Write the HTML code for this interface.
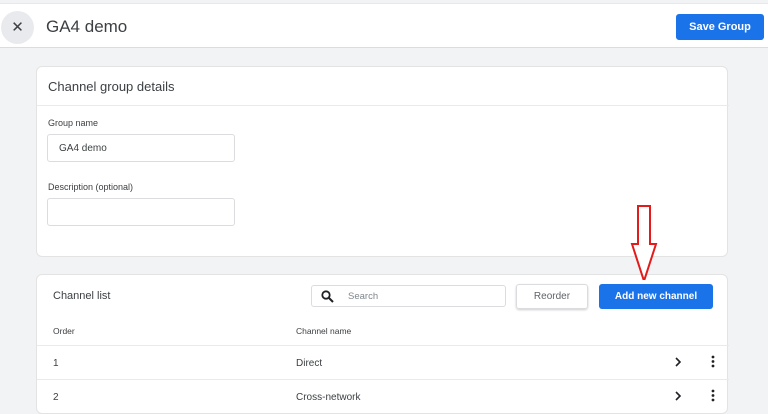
<!DOCTYPE html>
<html><head><style>
*{box-sizing:border-box;margin:0;padding:0}
body{width:768px;height:403px;overflow:hidden;background:#f1f3f4;font-family:"Liberation Sans",sans-serif;color:#202124;position:relative}
.top{position:absolute;left:0;top:3px;width:768px;height:45px;background:#fff;border-top:1px solid #e8e8e8;border-bottom:1px solid #dadce0}
.close{position:absolute;left:1px;top:7px;width:33px;height:33px;border-radius:50%;background:#e8eaed;text-align:center;line-height:33px;font-size:15px;color:#3c4043}
.title{position:absolute;left:46px;top:13px;font-size:17px;color:#3c4043}
.save{position:absolute;left:676px;top:10px;width:88px;height:26px;background:#1a73e8;color:#fff;border-radius:3px;font-size:11px;font-weight:bold;text-align:center;line-height:26px}
.card{position:absolute;left:36px;width:692px;background:#fff;border-radius:6px;border:1px solid #e3e3e3}
.lbl{position:absolute;font-size:9px;color:#3c4043}
.inp{position:absolute;width:188px;height:28px;border:1px solid #dadce0;border-radius:3px;font-size:10px;line-height:26px;padding-left:11px;color:#3c4043}
.t{position:absolute;font-size:10px;color:#3c4043}
.hr{position:absolute;left:0;width:692px;height:1px;background:#e8eaed}
</style></head><body>
<div class="top"><div class="close">✕</div><div class="title">GA4 demo</div><div class="save">Save Group</div></div>
<div class="card" style="top:66px;height:191px">
 <div style="position:absolute;left:11px;top:12px;font-size:13px;color:#3c4043">Channel group details</div>
 <div class="hr" style="top:38px"></div>
 <div class="lbl" style="left:11px;top:51px">Group name</div>
 <div class="inp" style="left:10px;top:67px;line-height:27px">GA4 demo</div>
 <div class="lbl" style="left:11px;top:115px">Description (optional)</div>
 <div class="inp" style="left:10px;top:131px"></div>
</div>
<div class="card" style="top:274px;height:140px">
 <div style="position:absolute;left:16px;top:15px;font-size:11px;color:#3c4043">Channel list</div>
 <div style="position:absolute;left:274px;top:10px;width:195px;height:22px;border:1px solid #dadce0;border-radius:3px">
  <svg style="position:absolute;left:9px;top:4px" width="13" height="13" viewBox="0 0 13 13"><circle cx="5" cy="5" r="3.7" fill="none" stroke="#202124" stroke-width="1.8"/><path d="M8 8l4 4" stroke="#202124" stroke-width="2"/></svg>
  <span style="position:absolute;left:36px;top:5px;font-size:9.5px;color:#80868b">Search</span></div>
 <div style="position:absolute;left:479px;top:9px;width:72px;height:25px;border:1px solid #dadce0;border-radius:3px;box-shadow:0 1px 2px rgba(0,0,0,.2);text-align:center;line-height:24px;font-size:10px;color:#5f6368">Reorder</div>
 <div style="position:absolute;left:562px;top:9px;width:114px;height:25px;background:#1a73e8;border-radius:3px;text-align:center;line-height:25px;font-size:10px;font-weight:bold;color:#fff">Add new channel</div>
 <div class="t" style="left:16px;top:51px;font-size:8.5px">Order</div>
 <div class="t" style="left:259px;top:51px;font-size:8.5px">Channel name</div>
 <div class="hr" style="top:70px"></div>
 <div class="t" style="left:16px;top:83px">1</div><div class="t" style="left:259px;top:83px">Direct</div>
 <div class="hr" style="top:104px"></div>
 <div class="t" style="left:16px;top:117px">2</div><div class="t" style="left:259px;top:117px">Cross-network</div>
 <svg style="position:absolute;left:636px;top:81px" width="10" height="50"><path d="M3 2l4 4-4 4M3 36l4 4-4 4" fill="none" stroke="#202124" stroke-width="1.6"/></svg>
 <svg style="position:absolute;left:673px;top:80px" width="6" height="50"><g fill="#202124"><circle cx="3" cy="2" r="1.4"/><circle cx="3" cy="6.5" r="1.4"/><circle cx="3" cy="11" r="1.4"/><circle cx="3" cy="36" r="1.4"/><circle cx="3" cy="40.5" r="1.4"/><circle cx="3" cy="45" r="1.4"/></g></svg>
</div>
<svg style="position:absolute;left:628px;top:204px" width="32" height="76"><path d="M10 2h12v38h6l-12 37l-12-37h6z" fill="#fff" stroke="#e31b1b" stroke-width="2"/></svg>
</body></html>
